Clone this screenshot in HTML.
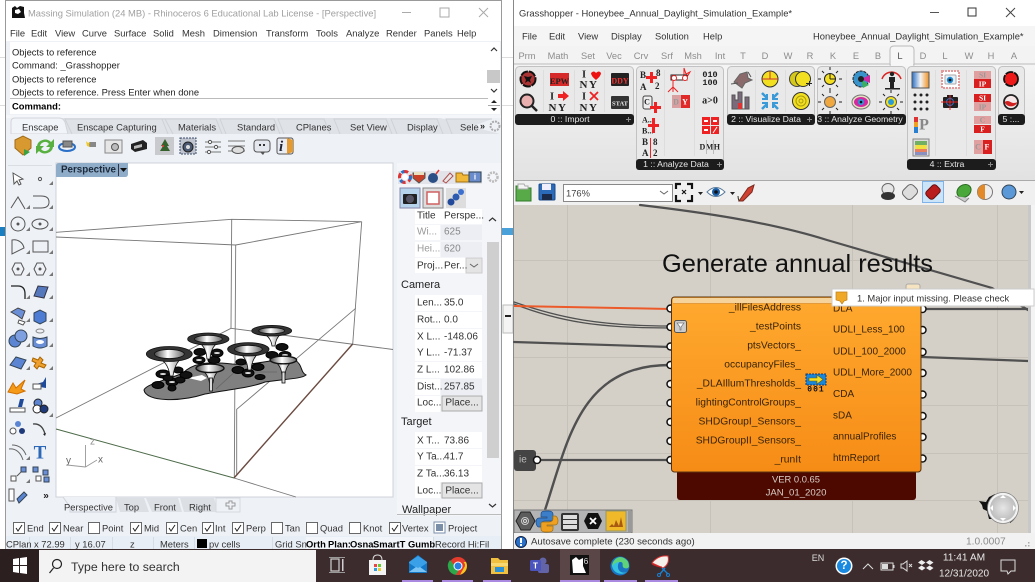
<!DOCTYPE html>
<html><head><meta charset="utf-8"><title>Rhino and Grasshopper</title>
<style>
html,body{margin:0;padding:0;background:#fff;width:1035px;height:582px;overflow:hidden}
svg{display:block;filter:blur(.35px)}
text{font-family:"Liberation Sans",sans-serif;font-size:9.4px;fill:#222;dominant-baseline:central}
.m{fill:#333}.g{fill:#8c8c8c}.c{text-anchor:middle}
.s{font-family:"Liberation Serif",serif;font-weight:bold;fill:#222}
.b{font-weight:bold;fill:#000}
.l{fill:#e8e8e8;font-size:8.7px;text-anchor:middle}
.in{text-anchor:end;font-size:10.3px;fill:#3a2408}
.out{font-size:10px;fill:#3a2408}
.p{font-size:10px;fill:#333}
.t{font-size:9.3px;fill:#8c8c8c;text-anchor:middle}
.ic{fill:none;stroke:#555;stroke-width:1}
</style></head><body>
<svg width="1035" height="582" viewBox="0 0 1035 582" xmlns="http://www.w3.org/2000/svg">
<defs>
<linearGradient id="or" x1="0" y1="0" x2="0" y2="1"><stop offset="0" stop-color="#ffa92f"/><stop offset="1" stop-color="#f68c16"/></linearGradient>
<linearGradient id="fn" x1="0" y1="0" x2="1" y2="0"><stop offset="0" stop-color="#444"/><stop offset=".45" stop-color="#fff"/><stop offset="1" stop-color="#666"/></linearGradient>
<linearGradient id="rb" x1="0" y1="0" x2="0" y2="1"><stop offset="0" stop-color="#f4f4f4"/><stop offset="1" stop-color="#e2e2e2"/></linearGradient>
<linearGradient id="sp" x1="0" y1="0" x2="1" y2="0"><stop offset="0" stop-color="#2a70c8"/><stop offset=".5" stop-color="#f4f4f4"/><stop offset="1" stop-color="#f09020"/></linearGradient>
<radialGradient id="nv"><stop offset="0" stop-color="#e6e6e6"/><stop offset="1" stop-color="#bdbdbd"/></radialGradient>
</defs>

<!-- desktop slivers -->
<rect width="1035" height="549" fill="#fff"/>
<rect x="0" y="57" width="6" height="1" fill="#ddd"/><rect x="0" y="105" width="6" height="1" fill="#ddd"/>
<rect x="0" y="227" width="6" height="9" fill="#1a7fc1"/>
<rect x="501" y="57" width="12" height="1" fill="#ddd"/><rect x="501" y="105" width="12" height="1" fill="#ddd"/>
<rect x="501" y="228" width="12" height="7" fill="#4aa0d8"/>
<rect x="503" y="305" width="10" height="28" fill="#f4f4f4" stroke="#bbb"/><rect x="505" y="315" width="6" height="2" fill="#222"/>

<!-- RHINO WINDOW -->
<rect x="5.500" y="0.500" width="496" height="549" fill="#eef1f6" stroke="#9a9a9a"/>
<rect x="6" y="1" width="495" height="40" fill="#fff"/>
<path d="M12 8l3-2 2 2 3-2 4 1v6l1 5H12z" fill="#111"/><path d="M15 10l4-1 2 3-3 2-3-1z" fill="#fff"/>
<text x="28" y="13" style="fill:#a0a0a0">Massing Simulation (24 MB) - Rhinoceros 6 Educational Lab License - [Perspective]</text>
<rect x="402" y="12" width="9" height="1" fill="#aaa"/>
<rect x="440" y="8" width="9" height="9" fill="none" stroke="#aaa"/>
<path d="M479 8l9 9M488 8l-9 9" stroke="#aaa" fill="none"/>
<text class="m" x="10" y="33">File</text><text class="m" x="31" y="33">Edit</text><text class="m" x="55" y="33">View</text><text class="m" x="82" y="33">Curve</text><text class="m" x="114" y="33">Surface</text><text class="m" x="153" y="33">Solid</text><text class="m" x="182" y="33">Mesh</text><text class="m" x="213" y="33">Dimension</text><text class="m" x="266" y="33">Transform</text><text class="m" x="316" y="33">Tools</text><text class="m" x="346" y="33">Analyze</text><text class="m" x="386" y="33">Render</text><text class="m" x="424" y="33">Panels</text><text class="m" x="457" y="33">Help</text>

<rect x="10" y="42" width="490" height="72" fill="#fff"/>
<rect x="10" y="98" width="478" height="1" fill="#bbb"/>
<text x="12" y="52">Objects to reference</text>
<text x="12" y="65">Command: _Grasshopper</text>
<text x="12" y="79">Objects to reference</text>
<text x="12" y="92">Objects to reference. Press Enter when done</text>
<text x="12" y="106" class="b">Command:</text>
<rect x="487" y="70" width="13" height="13" fill="#c8c8c8"/>
<path d="M491 51l3-3 3 3M491 89l3 3 3-3" fill="none" stroke="#333" stroke-width="1.200"/>
<path d="M491 103l3-3 3 3zM491 108l3 3 3-3z" fill="#222"/>
<rect x="488" y="105" width="12" height="1" fill="#aaa"/>

<!-- rhino tabs -->
<rect x="6" y="115" width="495" height="3" fill="#f4f6f9"/>
<path d="M67 134L60 118H440L500 134z" fill="#dfe2e7"/>
<path d="M72 134l-7-15h100l8 15M168 134l-6-15h54l6 15M226 134l-6-15h54l6 15M284 134l-6-15h46l6 15M340 134l-6-15h52l6 15M397 134l-6-15h46l6 15M452 134l-6-15h46" fill="#dfe2e7" stroke="#cfd2d7"/>
<path d="M11 134V122q0-4 4-4h44q4 0 6 4l3 12z" fill="#f1f4f9" stroke="#d2d5da"/>
<rect x="6" y="134" width="495" height="29" fill="#eef1f6"/>
<text x="22" y="127" class="m">Enscape</text><text x="77" y="127" class="m">Enscape Capturing</text><text x="178" y="127" class="m">Materials</text><text x="237" y="127" class="m">Standard</text><text x="296" y="127" class="m">CPlanes</text><text x="350" y="127" class="m">Set View</text><text x="407" y="127" class="m">Display</text><text x="460" y="127" class="m">Sele</text>
<text x="480" y="126" style="font-size:9px;font-weight:bold">»</text>
<circle cx="495" cy="126" r="4.500" fill="none" stroke="#aaa" stroke-width="2" stroke-dasharray="2 1"/>

<!-- enscape toolbar -->
<path d="M15 140l8-4 8 4v8l-8 7-8-7z" fill="#d89a30" stroke="#a06a18"/><path d="M24 149l6 3-6 4z" fill="#3ca040"/>
<path d="M37 146a8 7 0 0 1 14-4l3-3v8h-8l3-3a5 5 0 0 0-9 3zM53 147a8 7 0 0 1-14 4l-3 3v-8h8l-3 3a5 5 0 0 0 9-3z" fill="#58b040"/>
<ellipse cx="67" cy="147" rx="8" ry="4" fill="none" stroke="#2a70c8" stroke-width="2"/><rect x="63" y="141" width="9" height="6" fill="#888" stroke="#555"/>
<rect x="89" y="142" width="7" height="5" fill="#888"/><path d="M86 141l2 2 2-1-1 3 1 2-3-1z" fill="#f0c820"/>
<rect x="105" y="140" width="17" height="13" fill="#e6e6e6" stroke="#888"/><circle cx="115" cy="147" r="3.500" fill="#bbb" stroke="#555"/>
<path d="M131 144l12-4 4 3v6l-12 3-4-3z" fill="#222"/><path d="M134 146l8-2v3l-8 2z" fill="#bbb"/>
<rect x="155" y="137" width="19" height="18" fill="#c8cace"/><path d="M165 139l4 7h-2l3 5h-10l3-5h-2z" fill="#35612c"/><circle cx="163" cy="146" r="1" fill="#e33"/>
<rect x="180" y="138" width="16" height="16" fill="#bfc4cf" stroke="#3b4d6b" stroke-dasharray="2 1"/><circle cx="188" cy="147" r="5" fill="#4b5a72" stroke="#222"/><circle cx="188" cy="147" r="2" fill="#ddd"/>
<path d="M205 142h16M205 147h16M205 152h16" stroke="#777" fill="none"/><circle cx="210" cy="142" r="1.600" fill="#fff" stroke="#555"/><circle cx="216" cy="147" r="1.600" fill="#fff" stroke="#555"/><circle cx="209" cy="152" r="1.600" fill="#fff" stroke="#555"/>
<path d="M228 141h17M228 146h17M228 151h17" stroke="#777" fill="none"/><ellipse cx="238" cy="150" rx="6" ry="3.500" fill="#ddd" stroke="#555"/>
<rect x="254" y="140" width="16" height="12" rx="3" fill="#e4e7ee" stroke="#555"/><path d="M260 152l3 3 2-3z" fill="#555"/><rect x="259" y="144" width="2" height="2" fill="#333"/><rect x="263" y="144" width="2" height="2" fill="#333"/>
<rect x="277" y="138" width="16" height="16" rx="2" fill="#e9edf3" stroke="#555"/><path d="M287 138l6 2v12l-6 2z" fill="#e49a30"/><text x="279" y="147" style="font-family:'Liberation Serif',serif;font-weight:bold;font-style:italic;font-size:15px;fill:#223">i</text>

<!-- left toolbar -->
<rect x="8" y="165" width="44" height="1" fill="#dadde2"/>
<g class="ic">
<path d="M13 173l1 11 3-3 2 4 2-1-2-4 4-1z" fill="#fff" stroke="#555"/><circle cx="40" cy="179" r="1.600"/>
<path d="M11 208l7-11 7 12"/><path d="M33 196h8q8 0 8 6t-8 6h-8"/>
<circle cx="18" cy="224" r="7"/><circle cx="18" cy="224" r="1" fill="#555"/><ellipse cx="40" cy="224" rx="8" ry="5"/><circle cx="40" cy="224" r="1" fill="#555"/>
<path d="M12 240v14l12-6a10 10 0 0 0-12-8z"/><rect x="33" y="241" width="15" height="11"/>
<path d="M12 269l3-6h6l3 6-3 6h-6z"/><circle cx="18" cy="269" r="1" fill="#555"/><path d="M34 269l3-6h6l3 6-3 6h-6z"/><circle cx="40" cy="269" r="1" fill="#555"/>
</g>
<path d="M11 286h7q7 0 7 8v5" fill="none" stroke="#222" stroke-width="1.300"/>
<path d="M34 296l4-10 10 1-4 11z" fill="#5577bb" stroke="#334"/>
<path d="M11 312l7-4 7 3-3 8-4-3z" fill="#6b8fd6" stroke="#444"/><path d="M19 320l6 2-2 3-5-2z" fill="#fff" stroke="#555"/>
<path d="M34 313l6-3 6 3v8l-6 3-6-3z" fill="#4d7cd4" stroke="#345"/>
<circle cx="15" cy="341" r="6" fill="#5b85d2" stroke="#345"/><circle cx="21" cy="336" r="6" fill="#7fa0e0" stroke="#345"/>
<path d="M33 337q7 3 14 0v9q-7 4-14 0z" fill="#6b8fd6" stroke="#345"/><ellipse cx="40" cy="342" rx="4" ry="2" fill="#fff"/><ellipse cx="40" cy="331" rx="4" ry="2" fill="none" stroke="#888"/>
<path d="M10 365l6-8 10 3-5 9z" fill="#5b85d2" stroke="#345"/>
<path d="M33 358l5 2 2-3 3 3-2 3 5 2-2 3-5-2-2 3-3-3 2-3-4-2z" fill="#eea030" stroke="#a60"/>
<path d="M8 392l5-9 3 5 9-8-4 9 4 2-8 3z" fill="#f49a18" stroke="#d07000"/>
<path d="M33 385l10-3 3-5v11l-6-1z" fill="#1f4a9a"/><path d="M33 384h8v5h-8z" fill="#fff" stroke="#555"/>
<rect x="10" y="408" width="15" height="4" fill="#fff" stroke="#555"/><path d="M18 407l2-8h4l-2 8z" fill="#1f4a9a"/>
<circle cx="38" cy="403" r="4" fill="#5b85d2" stroke="#222"/><circle cx="37" cy="409" r="4" fill="#fff" stroke="#222"/><circle cx="44" cy="409" r="4" fill="#1f3a7a" stroke="#222"/>
<circle cx="18" cy="424" r="3" fill="#5b85d2"/><circle cx="13" cy="431" r="3" fill="#fff" stroke="#555"/><circle cx="22" cy="431" r="3" fill="#1f3a7a"/>
<path d="M33 424q9-1 12 10" fill="none" stroke="#444" stroke-width="1.300"/><path d="M43 434l2 2 1-3z" fill="#222"/>
<path d="M9 449q10-1 14 11M12 445q10 0 14 10" fill="none" stroke="#666"/>
<text x="40" y="453" class="s c" style="font-size:19px;fill:#2d68b8">T</text>
<rect x="11" y="476" width="5" height="5" fill="#fff" stroke="#555"/><rect x="21" y="467" width="5" height="5" fill="#6b8fd6" stroke="#345"/><path d="M17 476l4-4" stroke="#555"/>
<rect x="33" y="467" width="5" height="5" fill="#6b8fd6" stroke="#345"/><rect x="43" y="470" width="5" height="5" fill="#6b8fd6" stroke="#345"/><rect x="36" y="476" width="5" height="5" fill="#fff" stroke="#555"/><rect x="44" y="477" width="5" height="5" fill="#6b8fd6" stroke="#345"/>
<rect x="9" y="489" width="5" height="12" fill="#fff" stroke="#555"/><path d="M17 499l7-7 3 3-8 8z" fill="#5b85d2" stroke="#345"/>
<text x="46" y="496" class="c" style="font-size:10px;font-weight:bold">»</text>
<g fill="#777"><path d="M53 185v-4l-4 4zM53 209v-4l-4 4zM30 209v-4l-4 4zM53 231v-4l-4 4zM30 231v-4l-4 4zM53 254v-4l-4 4zM30 254v-4l-4 4zM53 276v-4l-4 4zM30 276v-4l-4 4zM53 299v-4l-4 4zM30 299v-4l-4 4zM53 322v-4l-4 4zM30 322v-4l-4 4zM53 347v-4l-4 4zM30 347v-4l-4 4zM53 370v-4l-4 4zM30 370v-4l-4 4zM53 417v-4l-4 4zM30 483v-4l-4 4zM30 460v-4l-4 4z"/></g>

<!-- viewport -->
<rect x="56" y="163" width="337" height="334" fill="#fff" stroke="#cfd3da"/>
<path d="M56 166q0-3 3-3h69v11q0 3-3 3H56z" fill="#8facc9"/>
<text x="61" y="170" style="font-size:9.800px;font-weight:bold;fill:#1c2a3a">Perspective</text>
<rect x="118" y="164" width="1" height="12" fill="#334"/><path d="M120 168h7l-3.500 4z" fill="#111"/>
<g fill="none" stroke="#777" stroke-width=".9">
<path d="M56 232.300L231.700 219.300L361.700 221.700L235.700 245L56 237"/>
<path d="M231.700 219.300L231 328.300M235.700 245L234.300 478M361.700 221.700L352.700 344"/>
<path d="M236.700 475V409.300L355.700 308.300M231 328.300L56 418M231 328.300L393 349.500M234 478L296 497"/>
</g>
<path d="M56 429L234 478" stroke="#4c6a48" stroke-width="1" fill="none"/>
<path d="M234 478L352.700 344" stroke="#6b4a40" stroke-width="1.400" fill="none"/>
<path d="M85.500 445V467M85.500 467L97 460M85.500 467L67 465" stroke="#999" fill="none" stroke-width=".9"/>
<text x="90" y="442" class="g" style="font-size:10px">z</text><text x="98" y="460" style="font-size:10px;fill:#666">x</text><text x="66" y="461" style="font-size:10px;fill:#666">y</text>

<!-- massing model -->
<path d="M144 390C146 384 170 379 183 373C192 364 205 361 232 364C260 366 280 356 295 360C303 365 300 372 306 375C301 379 285 379 265 382C250 388 225 390 205 394C180 402 146 402 144 390z" fill="#808080" stroke="#111" stroke-width="1"/>
<path d="M188 378l14-3 5 3-6 3z" fill="#fff"/>
<path d="M216 389l22-20M255 372l22 0" stroke="#666" fill="none" stroke-width=".8"/>
<g fill="#111" stroke="#000">
<ellipse cx="163" cy="374" rx="7" ry="4"/><ellipse cx="158" cy="385" rx="6" ry="3.500"/><ellipse cx="172" cy="382" rx="6" ry="4"/><ellipse cx="186" cy="375" rx="6" ry="3.500"/><ellipse cx="178" cy="370" rx="5" ry="3"/><ellipse cx="172" cy="388" rx="4" ry="3"/><ellipse cx="180" cy="380" rx="5" ry="3"/><ellipse cx="168" cy="378" rx="5" ry="3"/>
<ellipse cx="200" cy="352" rx="6" ry="3.500"/><ellipse cx="199" cy="360" rx="6" ry="3.500"/><ellipse cx="214" cy="360" rx="6" ry="3.500"/><ellipse cx="217" cy="353" rx="6" ry="4"/>
<ellipse cx="238" cy="370" rx="6" ry="3.500"/><ellipse cx="248" cy="373" rx="6" ry="4"/><ellipse cx="258" cy="367" rx="6" ry="3.500"/><ellipse cx="241" cy="362" rx="5" ry="3"/><ellipse cx="260" cy="377" rx="5" ry="2.500"/>
<ellipse cx="282" cy="347" rx="6" ry="3.500"/><ellipse cx="272" cy="355" rx="6" ry="3.500"/><ellipse cx="285" cy="355" rx="6" ry="3.500"/>
</g>
<g fill="#ddd"><ellipse cx="163" cy="374" rx="3" ry="1"/><ellipse cx="172" cy="382" rx="3" ry="1"/><ellipse cx="199" cy="360" rx="3" ry="1"/><ellipse cx="217" cy="353" rx="3" ry="1"/><ellipse cx="248" cy="373" rx="3" ry="1"/><ellipse cx="285" cy="355" rx="3" ry="1"/></g>
<g stroke="#111" stroke-width=".8">
<path d="M154 356Q168 360 170 376H173Q175 360 186 356z" fill="url(#fn)"/><ellipse cx="169.300" cy="354" rx="23" ry="7.500" fill="#333"/><ellipse cx="169.300" cy="354" rx="15" ry="4.500" fill="url(#fn)"/>
<path d="M196 341Q206 345 207 359H210Q211 345 221 341z" fill="url(#fn)"/><ellipse cx="208.300" cy="339" rx="20.700" ry="6" fill="#333"/><ellipse cx="208.300" cy="339" rx="14" ry="3.600" fill="url(#fn)"/>
<path d="M236 351Q247 356 248 370H251Q252 356 262 351z" fill="url(#fn)"/><ellipse cx="248.300" cy="349.300" rx="20.700" ry="6.700" fill="#333"/><ellipse cx="248.300" cy="349.300" rx="14" ry="4" fill="url(#fn)"/>
<path d="M260 332Q271 336 272 346H275Q276 336 284 332z" fill="url(#fn)"/><ellipse cx="271.700" cy="330.700" rx="20" ry="5.300" fill="#333"/><ellipse cx="271.700" cy="330.700" rx="13" ry="3" fill="url(#fn)"/>
<path d="M200 369Q208 373 209.500 383H213Q214 373 221 369z" fill="url(#fn)"/><ellipse cx="210" cy="368.300" rx="14" ry="4.200" fill="url(#fn)" stroke-width="1.400"/><rect x="209.500" y="378" width="3" height="13" fill="#ddd"/>
<path d="M274 361Q281 365 282 375H285Q286 365 293 361z" fill="url(#fn)"/><ellipse cx="283.300" cy="360" rx="13.300" ry="3.800" fill="url(#fn)" stroke-width="1.400"/><rect x="282" y="372" width="3" height="11" fill="#ddd"/>
</g>

<!-- viewport tabs -->
<path d="M56 497H63L70 507V512H116V497" fill="#eef1f6" stroke="#cfd3da"/>
<path d="M116 498h28l5 14h-29zM146 498h32l4 14h-30zM180 498h34l4 14h-34z" fill="#dcdfe4"/>
<path d="M216 498h24v14h-24z" fill="#eef1f6" stroke="#d6d9de"/>
<text x="64" y="507" class="m">Perspective</text><text x="124" y="507" class="m">Top</text><text x="154" y="507" class="m">Front</text><text x="189" y="507" class="m">Right</text>
<path d="M226 503h3v-2h3v2h3v3h-3v3h-3v-3h-3z" fill="#eef1f6" stroke="#999"/>

<!-- snap row -->
<g fill="#fff" stroke="#444" stroke-width=".8">
<rect x="13.500" y="522.500" width="11" height="11"/><rect x="49.500" y="522.500" width="11" height="11"/><rect x="88.500" y="522.500" width="11" height="11"/><rect x="130.500" y="522.500" width="11" height="11"/><rect x="166.500" y="522.500" width="11" height="11"/><rect x="202.500" y="522.500" width="11" height="11"/><rect x="232.500" y="522.500" width="11" height="11"/><rect x="271.500" y="522.500" width="11" height="11"/><rect x="306.500" y="522.500" width="11" height="11"/><rect x="349.500" y="522.500" width="11" height="11"/><rect x="389.500" y="522.500" width="11" height="11"/>
</g>
<path d="M16 528l2 3 4-6M52 528l2 3 4-6M133 528l2 3 4-6M169 528l2 3 4-6M205 528l2 3 4-6M235 528l2 3 4-6M392 528l2 3 4-6" fill="none" stroke="#222"/>
<rect x="434" y="522" width="11" height="11" fill="#fff" stroke="#7b8ea8"/><rect x="436" y="524" width="7" height="7" fill="#7b8ea8"/>
<text x="27" y="528" class="m">End</text><text x="63" y="528" class="m">Near</text><text x="102" y="528" class="m">Point</text><text x="144" y="528" class="m">Mid</text><text x="180" y="528" class="m">Cen</text><text x="215" y="528" class="m">Int</text><text x="246" y="528" class="m">Perp</text><text x="285" y="528" class="m">Tan</text><text x="320" y="528" class="m">Quad</text><text x="363" y="528" class="m">Knot</text><text x="402" y="528" class="m">Vertex</text><text x="448" y="528" class="m">Project</text>

<!-- status row -->
<rect x="6" y="536" width="495" height="13" fill="#e8eef6"/>
<g fill="#d7dde6"><rect x="29" y="537" width="1" height="12"/><rect x="70" y="537" width="1" height="12"/><rect x="112" y="537" width="1" height="12"/><rect x="153" y="537" width="1" height="12"/><rect x="194" y="537" width="1" height="12"/><rect x="272" y="537" width="1" height="12"/><rect x="433" y="537" width="1" height="12"/></g>
<rect x="306" y="537" width="127" height="12" fill="#f2f6fb"/>
<text x="6" y="544" class="m">CPlan</text><text x="34" y="544" class="m">x 72.99</text><text x="75" y="544" class="m">y 16.07</text><text x="130" y="544" class="m">z</text><text x="160" y="544" class="m">Meters</text><rect x="197" y="539" width="10" height="9" fill="#000"/><text x="209" y="544" class="m">pv cells</text><text x="275" y="544" class="m">Grid Sn</text><text x="306" y="544" class="b">Orth</text><text x="328" y="544" class="b">Plan:</text><text x="350" y="544" class="b">Osna</text><text x="373" y="544" class="b">SmartT</text><text x="408" y="544" class="b">Gumb</text><text x="435" y="544" class="m">Record Hi:Fil</text>

<!-- properties panel -->
<rect x="397" y="163" width="104" height="353" fill="#f3f5f9"/>
<rect x="398" y="171" width="84" height="13" fill="#e2e4e9"/>
<circle cx="405" cy="177" r="5.500" fill="none" stroke="#d33" stroke-width="3" stroke-dasharray="5 3"/><circle cx="405" cy="177" r="5.500" fill="none" stroke="#2a70c8" stroke-width="3" stroke-dasharray="3 8"/><circle cx="405" cy="177" r="3" fill="#fff"/>
<path d="M413 173h12v5l-6 5-6-5z" fill="#c84028" stroke="#555"/><path d="M414 172h10v3h-10z" fill="#e8e0c0"/>
<circle cx="433" cy="178" r="5" fill="#2c4f85"/><path d="M436 174l3-4" stroke="#d33" stroke-width="1.500"/>
<path d="M443 181l7-8 3 3-7 7z" fill="#e8e8e8" stroke="#b05050"/>
<path d="M456 173h6l1 2h7v7h-14z" fill="#f2b838" stroke="#a07010"/>
<rect x="469" y="172" width="12" height="10" fill="#6a8ccc" stroke="#345"/><text x="475" y="177" class="c b" style="font-size:8px;fill:#fff">i</text>
<circle cx="493" cy="177" r="4.500" fill="none" stroke="#bbb" stroke-width="2.500" stroke-dasharray="2 1"/>
<rect x="400" y="188" width="20" height="20" fill="#b6d4ec" stroke="#88a"/><rect x="403" y="194" width="14" height="10" rx="1" fill="#222"/><circle cx="410" cy="199" r="4" fill="#556"/>
<rect x="423" y="188" width="20" height="20" fill="#ddd" stroke="#888"/><rect x="427" y="192" width="12" height="12" fill="#fff" stroke="#d06060" stroke-width="1.500"/>
<rect x="446" y="188" width="20" height="20" fill="#ddd"/><circle cx="451" cy="202" r="3.500" fill="#234a9a"/><circle cx="456" cy="197" r="3.500" fill="#2c5ab0"/><circle cx="461" cy="192" r="3" fill="#3c70d0"/>
<!-- rows -->
<g fill="#fff">
<rect x="415" y="209" width="67" height="15"/><rect x="415" y="225" width="25" height="15"/><rect x="415" y="242" width="25" height="15"/><rect x="415" y="258" width="67" height="15"/>
<rect x="415" y="295" width="67" height="16"/><rect x="415" y="312" width="67" height="16"/><rect x="415" y="329" width="67" height="16"/><rect x="415" y="345" width="67" height="16"/><rect x="415" y="362" width="67" height="16"/><rect x="415" y="379" width="25" height="16"/><rect x="415" y="396" width="25" height="16"/>
<rect x="415" y="432" width="67" height="16"/><rect x="415" y="449" width="67" height="16"/><rect x="415" y="466" width="67" height="16"/><rect x="415" y="482" width="25" height="16"/>
</g>
<g fill="#eceef3"><rect x="441" y="225" width="41" height="15"/><rect x="441" y="242" width="41" height="15"/><rect x="441" y="379" width="41" height="16"/></g>
<rect x="466" y="258" width="16" height="15" fill="#e4e4e4" stroke="#ccc"/><path d="M470 264l4 3 4-3" fill="none" stroke="#666"/>
<rect x="442" y="396" width="40" height="15" fill="#e4e4e4" stroke="#aaa"/><rect x="442" y="483" width="40" height="15" fill="#e4e4e4" stroke="#aaa"/>
<text class="p" x="417" y="216">Title</text><text class="p" x="444" y="216">Perspe...</text>
<text class="p" x="417" y="232" style="fill:#999">Wi...</text><text class="p" x="444" y="232" style="fill:#888">625</text>
<text class="p" x="417" y="249" style="fill:#999">Hei...</text><text class="p" x="444" y="249" style="fill:#888">620</text>
<text class="p" x="417" y="266">Proj...</text><text class="p" x="444" y="266">Per...</text>
<text class="p" x="417" y="303">Len...</text><text class="p" x="444" y="303">35.0</text>
<text class="p" x="417" y="320">Rot...</text><text class="p" x="444" y="320">0.0</text>
<text class="p" x="417" y="337">X L...</text><text class="p" x="444" y="337">-148.06</text>
<text class="p" x="417" y="353">Y L...</text><text class="p" x="444" y="353">-71.37</text>
<text class="p" x="417" y="370">Z L...</text><text class="p" x="444" y="370">102.86</text>
<text class="p" x="417" y="387">Dist...</text><text class="p" x="444" y="387">257.85</text>
<text class="p" x="417" y="403">Loc...</text><text class="p c" x="462" y="403">Place...</text>
<text class="p" x="417" y="441">X T...</text><text class="p" x="444" y="441">73.86</text>
<text class="p" x="417" y="457">Y Ta...</text><text class="p" x="444" y="457">41.7</text>
<text class="p" x="417" y="474">Z Ta...</text><text class="p" x="444" y="474">36.13</text>
<text class="p" x="417" y="491">Loc...</text><text class="p c" x="462" y="491">Place...</text>
<text x="401" y="285" style="font-size:11px">Camera</text>
<text x="401" y="422" style="font-size:11px">Target</text>
<text x="402" y="510" style="font-size:11px">Wallpaper</text>
<rect x="487" y="242" width="12" height="216" fill="#cfcfcf"/>
<path d="M489 221l3.500-3 3.500 3M489 504l3.500 3 3.500-3" fill="none" stroke="#333" stroke-width="1.200"/>
<rect x="397" y="514" width="104" height="1" fill="#bbb"/>

<!-- GRASSHOPPER WINDOW -->
<rect x="513" y="0" width="522" height="549" fill="#f0f0f0"/>
<rect x="513" y="0" width="1" height="549" fill="#888"/>
<rect x="514" y="0" width="521" height="26" fill="#fff"/>
<text x="519" y="13" style="fill:#333">Grasshopper - Honeybee_Annual_Daylight_Simulation_Example*</text>
<rect x="930" y="12" width="9" height="1" fill="#555"/>
<rect x="968" y="8" width="8" height="8" fill="none" stroke="#333"/>
<path d="M1006 8l9 9M1015 8l-9 9" stroke="#444" fill="none"/>
<rect x="514" y="26" width="521" height="20" fill="#f5f5f5"/>
<text x="522" y="36" class="m">File</text><text x="549" y="36" class="m">Edit</text><text x="578" y="36" class="m">View</text><text x="611" y="36" class="m">Display</text><text x="655" y="36" class="m">Solution</text><text x="703" y="36" class="m">Help</text>
<text x="813" y="36" class="m">Honeybee_Annual_Daylight_Simulation_Example*</text>
<!-- tabs -->
<rect x="514" y="46" width="521" height="18" fill="#f3f3f3"/>
<text class="t" x="527" y="56">Prm</text><text class="t" x="558" y="56">Math</text><text class="t" x="588" y="56">Set</text><text class="t" x="614" y="56">Vec</text><text class="t" x="641" y="56">Crv</text><text class="t" x="667" y="56">Srf</text><text class="t" x="693" y="56">Msh</text><text class="t" x="720" y="56">Int</text><text class="t" x="743" y="56">T</text><text class="t" x="765" y="56">D</text><text class="t" x="788" y="56">W</text><text class="t" x="810" y="56">R</text><text class="t" x="833" y="56">K</text><text class="t" x="856" y="56">E</text><text class="t" x="878" y="56">B</text>
<rect x="514" y="64" width="521" height="116" fill="url(#rb)"/>
<rect x="514" y="63.500" width="521" height="1" fill="#bbb"/>
<path d="M890 65V50q0-4 4-4h16q4 0 4 4v15z" fill="#f6f6f6" stroke="#bbb"/><rect x="891" y="63" width="22" height="3" fill="#f6f6f6"/>
<text class="t" x="900" y="56" style="fill:#555">L</text>
<text class="t" x="923" y="56">D</text><text class="t" x="945" y="56">L</text><text class="t" x="969" y="56">W</text><text class="t" x="991" y="56">H</text><text class="t" x="1014" y="56">A</text>

<!-- ribbon groups -->
<g fill="#e9e9e9" stroke="#c2c2c2">
<rect x="515.500" y="66.500" width="118" height="58" rx="4"/><rect x="636.500" y="66.500" width="87" height="103" rx="4"/><rect x="727.500" y="66.500" width="87" height="58" rx="4"/><rect x="817.500" y="66.500" width="88" height="58" rx="4"/><rect x="907.500" y="66.500" width="88" height="103" rx="4"/><rect x="998.500" y="66.500" width="26" height="58" rx="4"/>
</g>
<g fill="#1c1c1c">
<rect x="515" y="114" width="119" height="11" rx="3"/><rect x="636" y="159" width="88" height="11" rx="3"/><rect x="727" y="114" width="88" height="11" rx="3"/><rect x="817" y="114" width="89" height="11" rx="3"/><rect x="907" y="159" width="89" height="11" rx="3"/><rect x="998" y="114" width="27" height="11" rx="3"/>
</g>
<text class="l" x="570" y="119">0 :: Import</text>
<text class="l" x="676" y="164">1 :: Analyze Data</text>
<text class="l" x="766" y="119">2 :: Visualize Data</text>
<text class="l" x="860" y="119">3 :: Analyze Geometry</text>
<text class="l" x="947" y="164">4 :: Extra</text>
<text class="l" x="1011" y="119">5 :...</text>
<g fill="#888"><path d="M626 119h2v-2h1v2h2v1h-2v2h-1v-2h-2zM717 164h2v-2h1v2h2v1h-2v2h-1v-2h-2zM807 119h2v-2h1v2h2v1h-2v2h-1v-2h-2zM988 164h2v-2h1v2h2v1h-2v2h-1v-2h-2z"/></g>
<g fill="#ddd"><rect x="543" y="70" width="1" height="42"/><rect x="574" y="70" width="1" height="42"/><rect x="604" y="70" width="1" height="42"/><rect x="664" y="70" width="1" height="86"/><rect x="694" y="70" width="1" height="86"/><rect x="755" y="70" width="1" height="42"/><rect x="785" y="70" width="1" height="42"/><rect x="846" y="70" width="1" height="42"/><rect x="876" y="70" width="1" height="42"/><rect x="935" y="70" width="1" height="86"/><rect x="966" y="70" width="1" height="86"/></g>

<!-- 0 Import -->
<circle cx="528" cy="79" r="7.500" fill="#a33" stroke="#111" stroke-width="2" stroke-dasharray="8 1"/><path d="M524 76l4 1 4-1-2 4 1 3-3-2-3 2 1-3z" fill="#111"/>
<circle cx="527" cy="101" r="6.500" fill="#eab0b0" stroke="#222" stroke-width="2"/><path d="M532 106l5 5" stroke="#222" stroke-width="2.500"/>
<rect x="550" y="73" width="19" height="13" fill="#d62a2a"/><text x="559.500" y="81" class="c s" style="font-size:8.500px;fill:#222">EPW</text>
<text x="584" y="75" class="c s" style="font-size:10.500px">I</text><path d="M591 73q3-3 5 0 3-3 5 0 0 3-5 7-5-4-5-7z" fill="#e11"/>
<text x="589" y="85" class="c s" style="font-size:11px;letter-spacing:1.500px">NY</text>
<rect x="611" y="73" width="18" height="13" rx="1" fill="#222"/><text x="620" y="81" class="c s" style="font-size:8px;fill:#e33">DDY</text>
<text x="552" y="97" class="c s" style="font-size:10.500px">I</text><path d="M558 94h5v-3l6 5-6 5v-3h-5z" fill="#e22"/>
<text x="558" y="108" class="c s" style="font-size:11px;letter-spacing:1.500px">NY</text>
<text x="584" y="97" class="c s" style="font-size:10.500px">I</text><path d="M590 92l8 8M598 92l-8 8" stroke="#e22" stroke-width="1.800"/>
<text x="589" y="108" class="c s" style="font-size:11px;letter-spacing:1.500px">NY</text>
<rect x="611" y="96" width="18" height="13" rx="1" fill="#333"/><text x="620" y="104" class="c s" style="font-size:6.500px;fill:#eee">STAT</text>

<!-- 1 Analyze Data -->
<text x="640" y="75" class="s" style="font-size:9px">B</text><text x="656" y="73" class="s" style="font-size:9px">8</text><text x="640" y="87" class="s" style="font-size:9px">A</text><text x="655" y="86" class="s" style="font-size:9px">2</text><path d="M646 76h4v-4h3v4h4v3h-4v4h-3v-4h-4z" fill="#e22"/>
<rect x="643" y="96" width="9" height="13" rx="2" fill="#eee" stroke="#444"/><text x="647" y="102" class="c s" style="font-size:8px">C</text><path d="M650 106h4v-4h3v4h4v3h-4v4h-3v-4h-4z" fill="#e22"/>
<text x="642" y="120" class="s" style="font-size:8px">A...</text><text x="642" y="131" class="s" style="font-size:8px">B...</text><path d="M648 124h4v-6h3v6h4v3h-4v6h-3v-6h-4z" fill="#e22"/>
<text x="642" y="142" class="s" style="font-size:9px">B</text><text x="653" y="142" class="s" style="font-size:9px">8</text><text x="642" y="153" class="s" style="font-size:9px">A</text><text x="653" y="153" class="s" style="font-size:9px">2</text><rect x="650" y="138" width="1" height="20" fill="#e22"/>
<path d="M684 68l2 6 4-2-3 5M684 68v8" stroke="#e22" fill="none"/><path d="M673 80v12M668 92l5-5 5 5" stroke="#e22" fill="none"/><rect x="671" y="75" width="16" height="5" fill="#fff" stroke="#222"/><circle cx="674" cy="78" r="2.500" fill="#fff" stroke="#e22"/><circle cx="685" cy="78" r="2.500" fill="#fff" stroke="#e22"/>
<rect x="672" y="95" width="9" height="13" fill="#d8a0a0"/><rect x="681" y="95" width="9" height="13" fill="#e02a2a"/><text x="676" y="102" class="c s" style="font-size:8px;fill:#999">D</text><text x="685" y="102" class="c s" style="font-size:8px;fill:#fff">Y</text>
<text x="710" y="75" class="c" style="font:bold 8.500px 'Liberation Mono',monospace;fill:#222">010</text><text x="710" y="83" class="c" style="font:bold 8.500px 'Liberation Mono',monospace;fill:#222">100</text>
<text x="710" y="101" class="c s" style="font-size:10px">a&gt;0</text>
<rect x="702" y="117" width="8" height="8" fill="#e22"/><rect x="711" y="117" width="8" height="8" fill="#e22"/><rect x="702" y="126" width="8" height="8" fill="#e22"/><rect x="711" y="126" width="8" height="8" fill="#e22"/><rect x="704" y="120" width="4" height="2" fill="#fff"/><rect x="713" y="120" width="4" height="2" fill="#fff"/><rect x="704" y="129" width="4" height="2" fill="#fff"/><path d="M713 133l4-6" stroke="#fff"/>
<text x="710" y="147" class="c s" style="font-size:8px;letter-spacing:.5px">DMH</text><rect x="706" y="140" width="1" height="14" fill="#bbb"/><rect x="713" y="140" width="1" height="14" fill="#bbb"/>

<!-- 2 Visualize -->
<path d="M734 82l6-8 7-2 1 6 4 2-7 3-3 5z" fill="#8a6a6a" stroke="#666"/><path d="M731 84l7-1M748 72l3 5" stroke="#555"/>
<circle cx="770" cy="79" r="8" fill="#f2e020" stroke="#333"/><path d="M762 79h16M770 71v8" stroke="#c33"/>
<circle cx="797" cy="79" r="7.500" fill="#d4c818" stroke="#444"/><circle cx="803" cy="79" r="7.500" fill="#f2e020" stroke="#333"/><path d="M806 83h3v-2h1v2h2v1h-2v2h-1v-2h-3z" fill="#222"/>
<path d="M732 109V95h3v5h3v-8h4v17h3v-12h4v12z" fill="#7a6a7a" stroke="#555"/><rect x="738" y="103" width="4" height="6" fill="#d33"/>
<path d="M762 93l5 5M778 93l-5 5M762 109l5-5M778 109l-5-5" stroke="#3a9ad8" stroke-width="2.500"/><path d="M767 94v5h-5M773 94v5h5M767 108v-5h-5M773 108v-5h5" stroke="#3a9ad8" fill="none" stroke-width="2"/>
<circle cx="801" cy="101" r="8.500" fill="#f2e020" stroke="#333"/><circle cx="801" cy="101" r="5" fill="none" stroke="#aa9a10"/><circle cx="801" cy="101" r="2" fill="none" stroke="#aa9a10"/>

<!-- 3 Analyze Geometry -->
<circle cx="830" cy="79" r="5.500" fill="#f4e020" stroke="#222"/><path d="M830 79v-5M830 79h5" stroke="#222"/><path d="M830 70v-3M830 88v3M821 79h-3M839 79h3M824 73l-2-2M836 85l2 2M836 73l2-2M824 85l-2 2" stroke="#222"/>
<circle cx="861" cy="79" r="8" fill="#3a94cc" stroke="#222" stroke-dasharray="3 1"/><path d="M861 79l9-4v8z" fill="#d02aa0"/><path d="M861 79l2 9 6-3z" fill="#3cb060"/><circle cx="861" cy="79" r="3" fill="#222"/>
<path d="M882 79a10 10 0 0 1 19 0" fill="none" stroke="#d22" stroke-width="1.500"/><circle cx="892" cy="74" r="2.200" fill="#222"/><path d="M889 77h6v5h-1v7h-4v-7h-1z" fill="#222"/><rect x="885" y="88" width="15" height="1.500" fill="#222"/>
<circle cx="830" cy="102" r="5.500" fill="#f0a840" stroke="#666"/><path d="M830 93v-3M830 111v3M821 102h-3M839 102h3M824 96l-2-2M836 108l2 2M836 96l2-2M824 108l-2 2" stroke="#222"/>
<ellipse cx="861" cy="102" rx="9" ry="7" fill="#e8e0c0" stroke="#777"/><ellipse cx="861" cy="102" rx="7" ry="5" fill="#d02aa0"/><circle cx="861" cy="102" r="3" fill="#2a9ad8"/><circle cx="861" cy="102" r="1.300" fill="#111"/>
<circle cx="891" cy="102" r="5.500" fill="#f4e020" stroke="#555"/><circle cx="891" cy="102" r="3" fill="#2a9ad8"/><path d="M891 93v-3M891 111v3M882 102h-3M900 102h3M885 96l-2-2M897 108l2 2M897 96l2-2M885 108l-2 2" stroke="#222"/>

<!-- 4 Extra -->
<rect x="912" y="72" width="17" height="16" fill="url(#sp)" stroke="#555"/>
<rect x="942" y="71" width="17" height="17" fill="#fff" stroke="#e29a9a" stroke-dasharray="2 1" stroke-width="2"/><rect x="945" y="75" width="11" height="9" rx="1" fill="#e8eef5" stroke="#aaa"/><circle cx="950" cy="80" r="3.200" fill="#1a8ad0"/><circle cx="950" cy="80" r="1.400" fill="#111"/>
<rect x="974" y="71" width="17" height="8" fill="#e0a0a0"/><rect x="974" y="79" width="17" height="9" fill="#d82020"/><text x="982.500" y="75" class="c s" style="font-size:7.500px;fill:#999">SI</text><text x="982.500" y="84" class="c s" style="font-size:7.500px;fill:#fff">IP</text>
<g fill="#222"><circle cx="915" cy="95" r="1.500"/><circle cx="921" cy="95" r="1.500"/><circle cx="927" cy="95" r="1.500"/><circle cx="915" cy="102" r="1.500"/><circle cx="921" cy="102" r="1.500"/><circle cx="927" cy="102" r="1.500"/><circle cx="915" cy="109" r="1.500"/><circle cx="921" cy="109" r="1.500"/><circle cx="927" cy="109" r="1.500"/></g>
<rect x="943" y="97" width="15" height="11" rx="1" fill="#222"/><rect x="947" y="95" width="6" height="3" fill="#222"/><circle cx="950" cy="102" r="3.500" fill="none" stroke="#2a70c8"/><path d="M950 95v15M941 102h17" stroke="#e22"/>
<rect x="974" y="94" width="17" height="8" fill="#d82020"/><rect x="974" y="102" width="17" height="9" fill="#e0a0a0"/><text x="982.500" y="98" class="c s" style="font-size:7.500px;fill:#fff">SI</text><text x="982.500" y="107" class="c s" style="font-size:7.500px;fill:#999">IP</text>
<rect x="914" y="117" width="4" height="5" fill="#d33"/><rect x="914" y="122" width="4" height="5" fill="#f0a020"/><rect x="914" y="127" width="4" height="6" fill="#2a80d0"/><text x="924" y="125" class="c s" style="font-size:16px;fill:#888">P</text>
<rect x="913" y="139" width="16" height="17" fill="#ddd" stroke="#888"/><rect x="915" y="141" width="12" height="4" fill="#70b060"/><rect x="915" y="145" width="12" height="4" fill="#f0e040"/><rect x="915" y="149" width="12" height="3" fill="#e88060"/><rect x="915" y="152" width="12" height="3" fill="#8a90c0"/>
<rect x="974" y="116" width="17" height="8" fill="#e0a0a0"/><rect x="974" y="125" width="17" height="8" fill="#d82020"/><text x="982.500" y="120" class="c s" style="font-size:7.500px;fill:#999">C</text><text x="982.500" y="129" class="c s" style="font-size:7.500px;fill:#fff">F</text>
<rect x="974" y="140" width="9" height="14" fill="#e0a0a0"/><rect x="983" y="140" width="9" height="14" fill="#d82020"/><text x="978" y="147" class="c s" style="font-size:8px;fill:#999">C</text><text x="987" y="147" class="c s" style="font-size:8px;fill:#fff">F</text>
<!-- 5 -->
<circle cx="1011" cy="79" r="7" fill="#ee1a1a" stroke="#111" stroke-width="1.800" stroke-dasharray="8 1"/>
<circle cx="1011" cy="102" r="7" fill="#f6e8e8" stroke="#222" stroke-width="1.800"/><path d="M1004.500 102q3-2 6 0t7 0a7 7 0 0 1-13 0z" fill="#d02020"/>

<!-- gh toolbar -->
<rect x="514" y="180" width="521" height="1" fill="#aaa"/>
<rect x="514" y="181" width="521" height="24" fill="#f0f0f0"/>
<path d="M516 186h7l2 2h6v13h-15z" fill="#58aa48" stroke="#2f7a2a"/><path d="M518 184h6l1 2h3v3h-10z" fill="#f4f4f4" stroke="#aaa"/>
<rect x="539" y="184" width="16" height="16" rx="1" fill="#2a6ab8" stroke="#1a4a88"/><rect x="542" y="184" width="9" height="6" fill="#eef"/><rect x="542" y="194" width="10" height="6" fill="#1a2a48"/>
<rect x="563.500" y="184.500" width="109" height="17" fill="#fff" stroke="#888"/><text x="566" y="193" style="font-size:9.400px;fill:#444">176%</text><path d="M660 191l4 3 4-3" fill="none" stroke="#666"/>
<path d="M676 189v-5h5M692 189v-5h-5M676 195v6h5M692 195v6h-5" fill="none" stroke="#111" stroke-width="2.200"/><path d="M682 190l4 4M686 190l-4 4" stroke="#111" stroke-width="1.200"/>
<path d="M698 192h5l-2.500 3z" fill="#222"/>
<path d="M707 192q9-9 18 0-9 9-18 0z" fill="#fff" stroke="#5a7a9a"/><circle cx="716" cy="192" r="4" fill="#1a5ea8"/><circle cx="716" cy="192" r="1.800" fill="#111"/>
<path d="M730 192h5l-2.500 3z" fill="#222"/>
<path d="M739 201l9-13 6-3-2 7-9 9z" fill="#d04030" stroke="#7a2a20"/><path d="M739 201q-1-3-1-5" stroke="#332" fill="none"/>
<ellipse cx="888" cy="189" rx="6" ry="5.500" fill="#e5e5e5" stroke="#666"/><ellipse cx="888" cy="196" rx="7" ry="4" fill="#333"/>
<rect x="903" y="186" width="14" height="12" rx="4" transform="rotate(-45 910 192)" fill="#ddd" stroke="#666"/>
<rect x="922.500" y="181.500" width="21" height="21" fill="#cce4f7" stroke="#7eb4ea"/><rect x="926" y="187" width="14" height="10" rx="3" transform="rotate(-45 933 192)" fill="#b81c1c" stroke="#611"/>
<ellipse cx="964" cy="191" rx="7.500" ry="6" transform="rotate(-35 964 191)" fill="#4aa83a" stroke="#2a6a22"/><path d="M955 196l10 6 4-4" fill="#ccc" stroke="#888"/>
<circle cx="985" cy="192" r="7.500" fill="#eee" stroke="#777"/><path d="M985 184.500a7.500 7.500 0 0 0 0 15z" fill="#e28a2a"/>
<circle cx="1009" cy="192" r="7" fill="#5a98d8" stroke="#345"/><path d="M1019 191h5l-2.500 3z" fill="#222"/>

<!-- canvas -->
<rect x="514" y="205" width="521" height="328" fill="#d4d0c8"/>
<g fill="#c6c2ba"><rect x="567" y="205" width="1" height="305"/><rect x="710" y="205" width="1" height="328"/><rect x="852" y="205" width="1" height="328"/><rect x="997" y="205" width="1" height="328"/>
<rect x="514" y="260" width="521" height="1"/><rect x="514" y="357" width="521" height="1"/><rect x="514" y="405" width="521" height="1"/><rect x="514" y="453" width="521" height="1"/><rect x="514" y="500" width="521" height="1"/></g>
<g fill="none" stroke="#505050" stroke-linecap="round">
<path d="M640 205C700 212 770 222 827 240L992 288L1028 310" stroke-width="2.200"/>
<path d="M514 302C560 318 600 326 670 326" stroke-width="1.300"/>
<path d="M514 304C560 322 600 328 670 328" stroke-width="1.300"/>
<path d="M514 342L670 347" stroke-width="2.200"/>
<path d="M545 510C568 440 580 365 670 365" stroke-width="2.400"/>
<path d="M537 460H670" stroke-width="2.200"/>
<path d="M922 309H1028" stroke-width="2.200"/>
<path d="M922 357L1028 361" stroke-width="2.200"/>
</g>
<path d="M514 306L670 309" stroke="#ec5a2a" stroke-width="2" fill="none"/>
<rect x="1028" y="205" width="3" height="328" fill="#c8c8c8"/><rect x="1031" y="205" width="4" height="328" fill="#f4f4f4"/>
<rect x="514" y="450" width="22" height="21" rx="3" fill="#444"/><text x="519" y="460" style="font-size:10px;fill:#bbb">ie</text>
<circle cx="537" cy="460" r="3.500" fill="#fff" stroke="#111" stroke-width="1.500"/>
<text x="797.500" y="264" class="c" style="font-size:25.400px;fill:#111">Generate annual results</text>

<!-- component -->
<rect x="677" y="470" width="239" height="30" rx="3" fill="#4d0800"/>
<text x="796" y="479" class="c" style="fill:#d8d0c8">VER 0.0.65</text>
<text x="796" y="493" class="c" style="font-size:9.600px;fill:#d8d0c8">JAN_01_2020</text>
<g fill="#fff" stroke="#111" stroke-width="1.500">
<circle cx="670.500" cy="308.500" r="3.500"/><circle cx="670.500" cy="327" r="3.500"/><circle cx="670.500" cy="346.500" r="3.500"/><circle cx="670.500" cy="365" r="3.500"/><circle cx="670.500" cy="384" r="3.500"/><circle cx="670.500" cy="403" r="3.500"/><circle cx="670.500" cy="422" r="3.500"/><circle cx="670.500" cy="441" r="3.500"/><circle cx="670.500" cy="460" r="3.500"/>
<circle cx="922.500" cy="309" r="3.500"/><circle cx="922.500" cy="330" r="3.500"/><circle cx="922.500" cy="352" r="3.500"/><circle cx="922.500" cy="373" r="3.500"/><circle cx="922.500" cy="394.500" r="3.500"/><circle cx="922.500" cy="416" r="3.500"/><circle cx="922.500" cy="437" r="3.500"/><circle cx="922.500" cy="458.500" r="3.500"/>
</g>
<rect x="671.500" y="297" width="249.500" height="175" rx="3" fill="url(#or)" stroke="#5a3410"/>
<path d="M673 298h246v5H673z" fill="#f6d39a"/><rect x="673" y="303" width="246" height="1" fill="#e39a3c"/>
<text class="in" x="801" y="308">_illFilesAddress</text><text class="in" x="801" y="327">_testPoints</text><text class="in" x="801" y="346">ptsVectors_</text><text class="in" x="801" y="365">occupancyFiles_</text><text class="in" x="801" y="384">_DLAIllumThresholds_</text><text class="in" x="801" y="403">lightingControlGroups_</text><text class="in" x="801" y="422">SHDGroupI_Sensors_</text><text class="in" x="801" y="441">SHDGroupII_Sensors_</text><text class="in" x="801" y="460">_runIt</text>
<text class="out" x="833" y="309">DLA</text><text class="out" x="833" y="330">UDLI_Less_100</text><text class="out" x="833" y="352">UDLI_100_2000</text><text class="out" x="833" y="373">UDLI_More_2000</text><text class="out" x="833" y="394.500">CDA</text><text class="out" x="833" y="416">sDA</text><text class="out" x="833" y="437">annualProfiles</text><text class="out" x="833" y="458.500">htmReport</text>
<rect x="674.500" y="320.500" width="12" height="12" rx="2" fill="#ccc" stroke="#555"/><path d="M677 323h7l-3 4v3h-1v-3z" fill="#fff" stroke="#777" stroke-width=".7"/>
<rect x="806" y="374" width="20" height="11" fill="#1a86d8" stroke="#1a3a6a" stroke-dasharray="2 1"/><path d="M809 378h8v-3l6 4.500-6 4.500v-3h-8z" fill="#f4e020" stroke="#6a5a10" stroke-width=".6"/>
<text x="816" y="390" class="c" style="font:bold 8px 'Liberation Mono',monospace;fill:#111;letter-spacing:1px">001</text>
<rect x="906" y="284" width="14" height="6" rx="2" fill="#f6e4c0" stroke="#aaa"/>

<!-- tooltip -->
<rect x="832" y="289" width="202" height="17" fill="#fff" stroke="#ccc"/>
<path d="M836 292h11v8l-3 1-2 3-2-3-4-1z" fill="#f0a828" stroke="#c08018" stroke-width=".7"/>
<text x="857" y="298" style="fill:#333">1. Major input missing. Please check</text>

<!-- canvas bottom toolbar -->
<rect x="514" y="510" width="118" height="23" fill="#b4b4b4" stroke="#777"/>
<rect x="628" y="511" width="4" height="21" fill="#999"/>
<path d="M516 521l5-9h9l5 9-5 9h-9z" fill="#5c5c5c" stroke="#222"/><circle cx="525" cy="521" r="3.500" fill="none" stroke="#ccc"/><circle cx="525" cy="521" r="1.500" fill="none" stroke="#ddd"/>
<path id="py" d="M546 511c-4 0-5 1-5 3v3h6v1h-8c-2 0-3 2-3 4s1 5 3 5h2v-3c0-2 2-3 4-3h6c1.500 0 2-1 2-2v-5c0-2-2-3-4-3z" fill="#3c7fc8" stroke="#1a4a88" stroke-width=".7"/>
<path d="M546 511c-4 0-5 1-5 3v3h6v1h-8c-2 0-3 2-3 4s1 5 3 5h2v-3c0-2 2-3 4-3h6c1.500 0 2-1 2-2v-5c0-2-2-3-4-3z" transform="rotate(180 547 521.500)" fill="#f0a020" stroke="#a07010" stroke-width=".7"/>
<rect x="561" y="513" width="18" height="18" rx="2" fill="#333"/><rect x="563" y="515" width="14" height="4" fill="#ddd"/><rect x="563" y="520" width="14" height="4" fill="#ddd"/><rect x="563" y="525" width="14" height="4" fill="#ddd"/>
<path d="M584 521l4-8h10l4 8-4 8h-10z" fill="#111"/><path d="M590 518l6 6M596 518l-6 6" stroke="#fff" stroke-width="1.800"/>
<rect x="606" y="511" width="20" height="20" fill="#efb92a" stroke="#996"/><path d="M609 527l3-3 2 2 2-6 3 6 2-9 2 10z" fill="#a85a10"/>

<!-- status bar -->
<rect x="514" y="533" width="521" height="16" fill="#f2f2f2"/>
<circle cx="521" cy="542" r="5.500" fill="#2a70c8" stroke="#124"/><rect x="520" y="538" width="2" height="5" fill="#fff"/><rect x="520" y="544" width="2" height="2" fill="#fff"/>
<text x="531" y="542" style="font-size:9.600px;fill:#333">Autosave complete (230 seconds ago)</text>
<text x="966" y="542" style="font-size:10.200px;fill:#8c8c8c">1.0.0007</text>
<g fill="#aaa"><rect x="1028" y="545" width="1.500" height="1.500"/><rect x="1025" y="545" width="1.500" height="1.500"/><rect x="1028" y="542" width="1.500" height="1.500"/></g>

<!-- navigation wheel -->
<path d="M979 501l7 1 3-5 6-3v25l-6 0-2-8-4-2-1-4z" fill="#111"/>
<path d="M1008 493q10 5 10 15t-8 15z" fill="#111"/>
<circle cx="1003" cy="508" r="15.500" fill="#f2f2f2" stroke="#888" stroke-width=".8"/><circle cx="1003" cy="508" r="13" fill="url(#nv)"/>
<path d="M1003 495l-3 3h6zM1003 521l-3-3h6zM990 508l3-3v6zM1016 508l-3-3v6z" fill="#fff"/>

<!-- TASKBAR -->
<rect x="0" y="549" width="1035" height="33" fill="#3d2c2d"/>
<rect x="0" y="549" width="39" height="33" fill="#2c1f20"/>
<g fill="#fff"><path d="M13 559l6-1v7h-6zM20 558l7-1v8h-7zM13 566h6v7l-6-1zM20 566h7v8l-7-1z"/></g>
<rect x="39" y="550" width="277" height="32" fill="#f3f3f3"/>
<circle cx="57" cy="564" r="4.500" fill="none" stroke="#222" stroke-width="1.200"/><path d="M53.500 568l-4 5" stroke="#222" stroke-width="1.200"/>
<text x="71" y="567" style="font-size:12.300px;fill:#333">Type here to search</text>
<rect x="331" y="559" width="8" height="12" fill="none" stroke="#d0d0d0" stroke-width="1.200"/><rect x="342" y="559" width="1.500" height="12" fill="#d0d0d0"/><rect x="329" y="557" width="16" height="1" fill="#999"/><rect x="329" y="572" width="16" height="1" fill="#999"/>
<path d="M369 560h17v15h-17z" fill="#f4f4f4"/><path d="M373 560q0-5 4.500-5t4.500 5" fill="none" stroke="#ddd"/><rect x="374" y="564" width="3" height="3" fill="#e44"/><rect x="378" y="564" width="3" height="3" fill="#6c3"/><rect x="374" y="568" width="3" height="3" fill="#39d"/><rect x="378" y="568" width="3" height="3" fill="#ec3"/>
<path d="M409 562l9-7 9 7v11h-18z" fill="#1278c8"/><path d="M409 563l9 6 9-6v-1l-9-6-9 6z" fill="#3aa0e8"/><path d="M409 572l7-5 2 1 2-1 7 5z" fill="#7cc4f4"/>
<circle cx="458" cy="566" r="9" fill="#e33c2c"/><path d="M466 562a9 9 0 0 1-6 12.800l4-7a4 4 0 0 0-.5-5.800z" fill="#f8c820"/><path d="M450 560a9 9 0 0 0 6 14.800l4-7a4 4 0 0 1-5.500-2z" fill="#2ca84a"/><circle cx="458" cy="566" r="4" fill="#2a80e0" stroke="#fff"/>
<path d="M491 558h7l2 2h8v14h-17z" fill="#f0c040"/><rect x="491" y="563" width="17" height="3" fill="#f8d870"/><rect x="495" y="567" width="9" height="5" fill="#2a90d8"/>
<circle cx="543" cy="561" r="3.500" fill="#6264a7"/><rect x="538" y="564" width="11" height="9" rx="2" fill="#6264a7"/><rect x="530" y="560" width="11" height="11" rx="1.500" fill="#4b53bc"/><text x="535.500" y="566" class="c b" style="font-size:8px;fill:#fff">T</text>
<rect x="560" y="549" width="40" height="33" fill="#5a4646"/>
<rect x="570" y="555" width="19" height="20" fill="#111"/><path d="M572 560l4-3 3 3 4-2v8l3 7h-13z" fill="#fff"/><text x="586" y="561" class="c" style="font-size:8.500px;fill:#ddd">6</text>
<circle cx="620" cy="566" r="9.500" fill="#1a74c4"/><path d="M612 566a9 9 0 0 1 17-3c-2-3-10-4-11 2s4 9 9 7a9.500 9.500 0 0 1-15-6z" fill="#35c1e1"/><path d="M620 557a9.500 9.500 0 0 1 9 9c0 3-5 3-6 1s1-5-3-5-6 2-8 4a9.500 9.500 0 0 1 8-9z" fill="#5fd37a"/>
<path d="M652 563q6-8 16-7 2 8-5 12z" fill="#f6f0ea" stroke="#d33"/><path d="M652 564q5 3 10 3" stroke="#c22" fill="none"/><path d="M662 568l6 6M665 568l-5 6" stroke="#1a80d0" fill="none" stroke-width="1.400"/><circle cx="668" cy="575" r="1.500" fill="none" stroke="#1a80d0"/><circle cx="659" cy="575" r="1.500" fill="none" stroke="#1a80d0"/>
<g fill="#a98ae0"><rect x="402" y="580" width="31" height="2"/><rect x="442" y="580" width="31" height="2"/><rect x="483" y="580" width="28" height="2"/><rect x="560" y="580" width="40" height="2"/><rect x="604" y="580" width="33" height="2"/><rect x="645" y="580" width="33" height="2"/></g>
<text x="818" y="558" class="c" style="font-size:9px;fill:#ddd">EN</text>
<circle cx="844" cy="566" r="8.500" fill="#fff"/><circle cx="844" cy="566" r="7" fill="#1a8ae0"/><text x="844" y="566" class="c b" style="font-size:11.500px;fill:#fff">?</text>
<path d="M863 569l5-5 5 5" fill="none" stroke="#ddd"/>
<rect x="881" y="563" width="12" height="7" fill="none" stroke="#ddd"/><rect x="882" y="564" width="6" height="5" fill="#ddd"/><rect x="893" y="565" width="1.500" height="3" fill="#ddd"/>
<path d="M901 564h2l4-3v10l-4-3h-2z" fill="none" stroke="#ddd"/><path d="M909 564l3 3M912 564l-3 3" stroke="#ddd" fill="none"/>
<path d="M922 561l4 2.500-3.500 2.500-4-2.500zM930 561l4 2.500-3.500 2.500-4-2.500zM922 566.500l4 2.500-3.500 2.500-4-2.500zM930 566.500l4 2.500-3.500 2.500-4-2.500z" fill="#eee" transform="translate(-.5 -1)"/>
<text x="964" y="558" class="c" style="font-size:10.200px;fill:#e8e8e8">11:41 AM</text>
<text x="964" y="574" class="c" style="font-size:10px;fill:#e8e8e8">12/31/2020</text>
<path d="M1001 560h14v11h-4l-3 3-1-3h-6z" fill="none" stroke="#ddd"/>
</svg>
</body></html>
